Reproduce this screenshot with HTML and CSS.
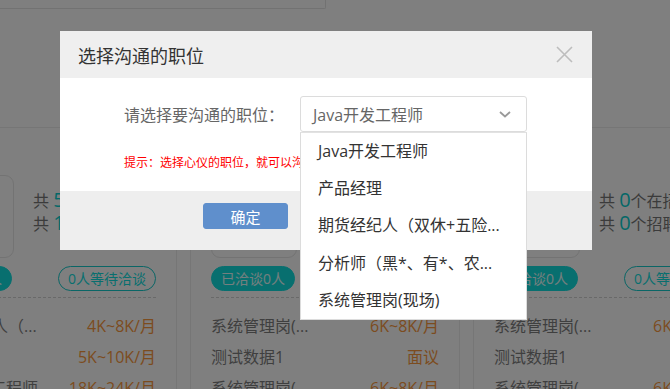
FILE: index.html
```html
<!DOCTYPE html>
<html lang="zh-CN">
<head>
<meta charset="utf-8">
<title>选择沟通的职位</title>
<link rel="stylesheet" href="styles.css">
</head>
<body>
<div class="page">
  <div class="toppanel"></div>
  <div class="cols">
    <div class="col">
      <div class="summary">
        <div class="logo"></div>
        <div class="stats">
          <div class="stat">共 <b>5</b>个在招职位</div>
          <div class="stat">共 <b>1</b>个招聘者</div>
        </div>
      </div>
      <div class="badges">
        <span class="pill filled">已洽谈0人</span>
        <span class="pill outline">0人等待洽谈</span>
      </div>
      <ul class="jobs">
        <li><span class="jt">期货经纪人（...</span><span class="sal">4K~8K/月</span></li>
        <li><span class="jt">产品经理</span><span class="sal">5K~10K/月</span></li>
        <li><span class="jt">Java开发工程师</span><span class="sal">18K~24K/月</span></li>
      </ul>
    </div>
    <div class="col">
      <div class="summary">
        <div class="logo"></div>
        <div class="stats">
          <div class="stat">共 <b>3</b>个在招职位</div>
          <div class="stat">共 <b>1</b>个招聘者</div>
        </div>
      </div>
      <div class="badges">
        <span class="pill filled">已洽谈0人</span>
        <span class="pill outline">0人等待洽谈</span>
      </div>
      <ul class="jobs">
        <li><span class="jt">系统管理岗(...</span><span class="sal">6K~8K/月</span></li>
        <li><span class="jt">测试数据1</span><span class="sal">面议</span></li>
        <li><span class="jt">系统管理岗(...</span><span class="sal">6K~8K/月</span></li>
      </ul>
    </div>
    <div class="col">
      <div class="summary">
        <div class="logo"></div>
        <div class="stats">
          <div class="stat">共 <b>0</b>个在招职位</div>
          <div class="stat">共 <b>0</b>个招聘者</div>
        </div>
      </div>
      <div class="badges">
        <span class="pill filled">已洽谈0人</span>
        <span class="pill outline">0人等待洽谈</span>
      </div>
      <ul class="jobs">
        <li><span class="jt">系统管理岗(...</span><span class="sal">6K~8K/月</span></li>
        <li><span class="jt">测试数据1</span><span class="sal">面议</span></li>
        <li><span class="jt">系统管理岗(...</span><span class="sal">6K~8K/月</span></li>
      </ul>
    </div>
  </div>
</div>

<div class="mask"></div>

<div class="modal">
  <div class="mhead">
    <h3 class="mtitle">选择沟通的职位</h3>
    <button class="close" aria-label="关闭">
      <svg width="17" height="17" viewBox="0 0 17 17"><path d="M1 1L16 16M16 1L1 16" stroke="#bdbdbd" stroke-width="1.6" fill="none"/></svg>
    </button>
  </div>
  <div class="mbody">
    <div class="field">
      <label class="flabel">请选择要沟通的职位：</label>
      <div class="select">
        <div class="selbox">
          <span class="selval">Java开发工程师</span>
          <svg class="chev" width="12" height="7" viewBox="0 0 12 7"><path d="M1 1L6 5.5L11 1" stroke="#9a9a9a" stroke-width="1.8" fill="none"/></svg>
        </div>
        <ul class="dropdown">
          <li>Java开发工程师</li>
          <li>产品经理</li>
          <li>期货经纪人（双休+五险...</li>
          <li>分析师（黑*、有*、农...</li>
          <li>系统管理岗(现场)</li>
        </ul>
      </div>
    </div>
    <p class="tip">提示：选择心仪的职位，就可以沟通啦</p>
  </div>
  <div class="mfoot">
    <button class="btn primary">确定</button>
    <button class="btn">取消</button>
  </div>
</div>
</body>
</html>
```
FILE: styles.css
```css
* { box-sizing: border-box; }
html, body { margin: 0; padding: 0; }
body {
  width: 670px;
  height: 389px;
  overflow: hidden;
  background: #ffffff;
  font-family: "Open Sans", "Noto Sans CJK SC", sans-serif;
  position: relative;
}

/* background page */
.page { width: 670px; }
.toppanel {
  width: 326px;
  height: 9px;
  border-right: 1px solid #e4e4e4;
  border-bottom: 1px solid #e4e4e4;
  border-bottom-right-radius: 2px;
}
.cols {
  display: flex;
  gap: 13px;
  margin-left: -93px;
  margin-top: 118px;
}
.col {
  flex: 0 0 270px;
  border: 1px solid #ececec;
  border-radius: 8px;
  padding: 47px 20px 0;
  height: 300px;
}
.summary { display: flex; gap: 19px; align-items: flex-start; }
.logo {
  width: 86px;
  height: 83px;
  border: 1px solid #e6e6e6;
  border-radius: 9px;
  flex: none;
}
.stats { padding-top: 14px; white-space: nowrap; }
.stat {
  font-size: 16px;
  line-height: 21px;
  color: #777;
}
.stat b {
  font-weight: normal;
  font-size: 20px;
  color: #0ad0d0;
}
.badges {
  margin-top: 8px;
  display: flex;
  justify-content: space-between;
  padding-bottom: 6px;
  border-bottom: 1px dashed #d2d2d2;
}
.pill {
  height: 25px;
  line-height: 23px;
  padding: 0 9px;
  border-radius: 13px;
  font-size: 14px;
  border: 1px solid #14cccc;
  white-space: nowrap;
}
.pill.filled { background: #10dede; color: #e8ffff; border-color: #10dede; }
.pill.outline { color: #10dede; background: transparent; }
.jobs {
  list-style: none;
  margin: 0;
  padding: 13px 0 0;
}
.jobs li {
  display: flex;
  justify-content: space-between;
  height: 31px;
  line-height: 31px;
  font-size: 16px;
  white-space: nowrap;
}
.jt { color: #7e7e7e; }
.sal { color: #f9993f; }

/* mask */
.mask {
  position: absolute;
  inset: 0;
  background: rgba(0, 0, 0, 0.5);
}

/* modal */
.modal {
  position: absolute;
  left: 60px;
  top: 31px;
  width: 532px;
  background: #fff;
}
.mhead {
  height: 47px;
  background: #efefef;
  display: flex;
  align-items: center;
  justify-content: space-between;
  padding: 0 19px 0 18px;
}
.mtitle {
  margin: 0;
  font-weight: normal;
  font-size: 18px;
  color: #333;
}
.close {
  border: 0;
  background: none;
  padding: 0;
  width: 17px;
  height: 17px;
  display: flex;
}
.mbody {
  height: 113px;
  padding: 18px 0 0 64px;
}
.field { display: flex; align-items: center; gap: 16px; }
.flabel {
  width: 160px;
  font-size: 16px;
  color: #666;
  white-space: nowrap;
}
.select { position: relative; width: 227px; z-index: 5; }
.selbox {
  height: 36px;
  border: 1px solid #dcdcdc;
  border-radius: 3px;
  display: flex;
  align-items: center;
  justify-content: space-between;
  padding: 0 15px 0 12px;
}
.selval { font-size: 16px; color: #666; }
.chev { margin-top: 1px; }
.dropdown {
  position: absolute;
  top: 36px;
  left: 0;
  width: 227px;
  margin: 0;
  padding: 0;
  list-style: none;
  background: #fff;
  border: 1px solid #dcdcdc;
  border-top-color: #e2e2e2;
}
.dropdown li {
  height: 37.2px;
  line-height: 37.2px;
  padding-left: 17px;
  font-size: 16px;
  color: #333;
  white-space: nowrap;
}
.tip {
  margin: 24px 0 0;
  font-size: 12px;
  line-height: 14px;
  color: #ff0000;
  white-space: nowrap;
}
.mfoot {
  height: 59px;
  background: #eeeeee;
  display: flex;
  justify-content: center;
  gap: 76px;
  padding-top: 12px;
}
.btn {
  width: 85px;
  height: 26px;
  border-radius: 3px;
  border: 1px solid #ccc;
  background: #fff;
  font-family: inherit;
  font-size: 15px;
  color: #555;
  padding: 0;
}
.btn.primary {
  background: #5f8fcc;
  border-color: #5f8fcc;
  color: #fff;
}
```
